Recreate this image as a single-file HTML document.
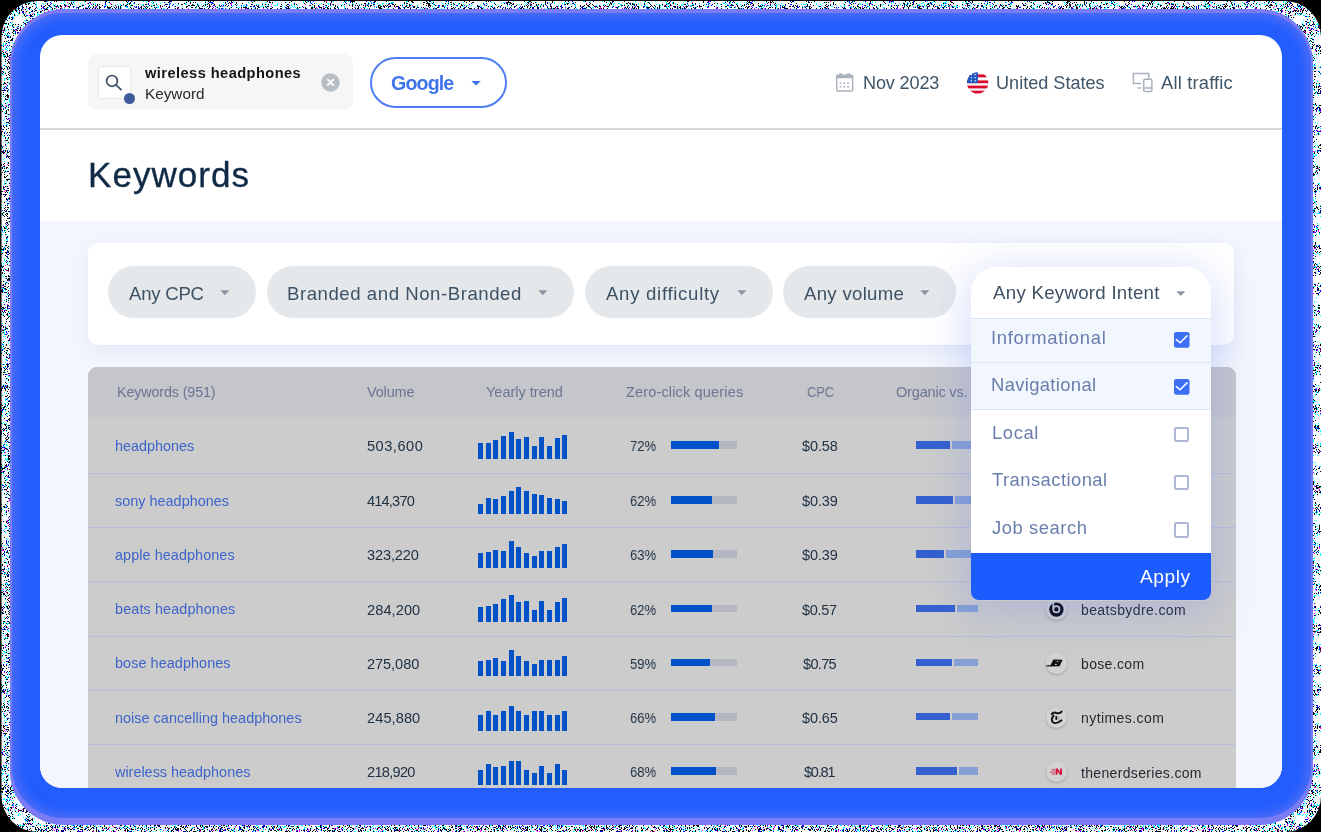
<!DOCTYPE html>
<html><head><meta charset="utf-8"><style>
html,body{margin:0;padding:0;}
body{width:1321px;height:832px;position:relative;overflow:hidden;background:#000;font-family:"Liberation Sans", sans-serif;}
.r{position:absolute;}
.t{position:absolute;line-height:1;white-space:nowrap;font-family:"Liberation Sans", sans-serif;will-change:transform;}
#card{position:absolute;left:0;top:0;width:1321px;height:832px;clip-path:inset(35px 39px 44px 40px round 22px);}
</style></head><body>
<div class="r" style="left:0.00px;top:0.00px;width:1321.00px;height:832.00px;background:#000;"></div>
<svg class="r" style="left:0;top:0" width="1321" height="832"><defs><filter id="nz" x="0" y="0" width="1321" height="832" filterUnits="userSpaceOnUse" color-interpolation-filters="sRGB"><feTurbulence type="turbulence" baseFrequency="0.95" numOctaves="1" seed="11"/><feColorMatrix type="matrix" values="1 0 0 0 0  1 0 0 0 0  1 0 0 0 0  0 0 0 0 1"/><feComponentTransfer><feFuncR type="discrete" tableValues="1 1 1 1 1 0 0 0 0 1 0 0 0 0 0 0 0 0 0 0"/><feFuncG type="discrete" tableValues="1 1 1 1 1 1 0 0 0 0 0 0 0 0 0 0 0 0 0 0"/><feFuncB type="discrete" tableValues="1 1 1 1 1 1 0 1 0 1 0 0 0 0 0 0 0 0 0 0"/></feComponentTransfer></filter><clipPath id="hc"><rect x="1.5" y="1" width="1319.5" height="831" rx="36"/></clipPath></defs><g clip-path="url(#hc)"><rect x="0" y="0" width="1321" height="832" fill="#fff" filter="url(#nz)"/></g></svg>
<div class="r" style="left:9.50px;top:9.00px;width:1303.50px;height:816.00px;background:#7b7cf4;border-radius:54px;"></div>
<div class="r" style="left:12.00px;top:12.50px;width:1298.50px;height:805.50px;background:#235dfd;border-radius:51px;box-shadow:inset 0 0 12px 3px rgba(120,125,240,0.6);"></div>
<div id="card">
<div class="r" style="left:0.00px;top:0.00px;width:1321.00px;height:832.00px;background:#ffffff;"></div>
<div class="r" style="left:0.00px;top:221.00px;width:1321.00px;height:611.00px;background:#f3f6fc;"></div>
<div class="r" style="left:0.00px;top:128.20px;width:1321.00px;height:1.50px;background:#d4d8de;"></div>
<div class="r" style="left:88.00px;top:54.00px;width:265.00px;height:56.00px;background:#f6f6f6;border-radius:9px;"></div>
<div class="r" style="left:97.50px;top:66.00px;width:33.00px;height:33.30px;background:#ffffff;border:1px solid #e5e8ed;box-sizing:border-box;border-radius:3px;"></div>
<svg class="r" style="left:98px;top:66px" width="32" height="33"><circle cx="14" cy="14.9" r="5.4" fill="none" stroke="#3b4f66" stroke-width="1.7"/><line x1="18" y1="18.9" x2="23" y2="23.6" stroke="#3b4f66" stroke-width="1.8" stroke-linecap="round"/></svg>
<div class="r" style="left:124.00px;top:93.00px;width:11.00px;height:11.00px;background:#3e5b9c;border-radius:50%;"></div>
<div class="t" style="left:145.00px;top:65.64px;font-size:14.6px;color:#151515;font-weight:700;letter-spacing:0.45px;">wireless headphones</div>
<div class="t" style="left:145.00px;top:86.05px;font-size:15.3px;color:#2a2a2a;font-weight:400;letter-spacing:0px;">Keyword</div>
<svg class="r" style="left:321px;top:73px" width="19" height="19"><circle cx="9.5" cy="9.5" r="9.2" fill="#b8bec5"/><path d="M6.8 6.6 L12.2 12 M12.2 6.6 L6.8 12" stroke="#fff" stroke-width="2" stroke-linecap="round"/></svg>
<div class="r" style="left:370.00px;top:56.80px;width:137.00px;height:51.50px;background:transparent;border:2px solid #4d7ff3;box-sizing:border-box;border-radius:26px;"></div>
<div class="t" style="left:390.80px;top:73.71px;font-size:19.6px;color:#3f74ea;font-weight:700;letter-spacing:-0.85px;">Google</div>
<svg class="r" style="left:471px;top:80px" width="11" height="7"><path d="M0.4 0.9 L9.8 0.9 L5.1 5.6 Z" fill="#3f74ea"/></svg>
<svg class="r" style="left:835px;top:72px" width="20" height="21"><rect x="1.7" y="3.2" width="16" height="15.8" rx="1" fill="none" stroke="#a9b2bc" stroke-width="1.4"/><rect x="1.7" y="3.2" width="16" height="3" fill="#a9b2bc"/><rect x="4.2" y="1.3" width="3" height="2.6" fill="#a9b2bc"/><rect x="11.8" y="1.3" width="3" height="2.6" fill="#a9b2bc"/><rect x="4.6" y="10.4" width="1.7" height="1.7" fill="#a9b2bc"/><rect x="4.6" y="13.9" width="1.7" height="1.7" fill="#a9b2bc"/><rect x="8.4" y="10.4" width="1.7" height="1.7" fill="#a9b2bc"/><rect x="8.4" y="13.9" width="1.7" height="1.7" fill="#a9b2bc"/><rect x="12.2" y="10.4" width="1.7" height="1.7" fill="#a9b2bc"/><rect x="12.2" y="13.9" width="1.7" height="1.7" fill="#a9b2bc"/></svg>
<div class="t" style="left:863.00px;top:73.68px;font-size:18.1px;color:#3e5467;font-weight:400;letter-spacing:-0.15px;">Nov 2023</div>
<svg class="r" style="left:967px;top:71.5px" width="22" height="23"><defs><clipPath id="fc"><circle cx="10.6" cy="10.9" r="10.7"/></clipPath></defs><g clip-path="url(#fc)"><rect width="22" height="23" fill="#f4f6f8"/><rect x="0" y="2.40" width="22" height="2.90" fill="#dc0a2c"/><rect x="0" y="8.40" width="22" height="2.80" fill="#dc0a2c"/><rect x="0" y="13.60" width="22" height="2.80" fill="#dc0a2c"/><rect x="0" y="18.70" width="22" height="3.20" fill="#dc0a2c"/><rect x="0" y="0" width="10.9" height="11.1" fill="#1f58c2"/><rect x="3.8" y="2.0" width="1.2" height="1.2" fill="#fff"/><rect x="3.8" y="5.1" width="1.2" height="1.2" fill="#fff"/><rect x="3.8" y="8.2" width="1.2" height="1.2" fill="#fff"/><rect x="7.6" y="2.0" width="1.2" height="1.2" fill="#fff"/><rect x="7.6" y="5.1" width="1.2" height="1.2" fill="#fff"/><rect x="7.6" y="8.2" width="1.2" height="1.2" fill="#fff"/></g></svg>
<div class="t" style="left:995.50px;top:73.68px;font-size:18.1px;color:#3e5467;font-weight:400;letter-spacing:0px;">United States</div>
<svg class="r" style="left:1132px;top:72px" width="22" height="22"><path d="M16.7 6.6 V1.4 H1.4 V11.6 H9" fill="none" stroke="#a9b2bc" stroke-width="1.5"/><path d="M5.6 16 H9.2" stroke="#a9b2bc" stroke-width="1.5"/><rect x="11.7" y="7.3" width="8.2" height="12.3" rx="1.4" fill="none" stroke="#a9b2bc" stroke-width="1.5"/><line x1="11.7" y1="16" x2="19.9" y2="16" stroke="#a9b2bc" stroke-width="1.4"/></svg>
<div class="t" style="left:1161.00px;top:73.51px;font-size:18.3px;color:#3e5467;font-weight:400;letter-spacing:0.2px;">All traffic</div>
<div class="t" style="left:88.30px;top:157.37px;font-size:35px;color:#0f2a45;font-weight:400;letter-spacing:1.05px;-webkit-text-stroke:0.35px #0f2a45;">Keywords</div>
<div class="r" style="left:87.80px;top:242.50px;width:1146.20px;height:102.50px;background:#ffffff;border-radius:10px;box-shadow:0 6px 18px rgba(90,120,230,0.10);"></div>
<div class="r" style="left:108.00px;top:266.40px;width:148.00px;height:52.00px;background:#e5e8eb;border-radius:26px;"></div>
<div class="t" style="left:129.00px;top:284.86px;font-size:18.6px;color:#3e5265;font-weight:400;letter-spacing:-0.25px;">Any CPC</div>
<svg class="r" style="left:219.5px;top:290.4px" width="10" height="6"><path d="M0.3 0.3 L9.3 0.3 L4.8 5.3 Z" fill="#8a96a2"/></svg>
<div class="r" style="left:267.00px;top:266.40px;width:307.00px;height:52.00px;background:#e5e8eb;border-radius:26px;"></div>
<div class="t" style="left:287.00px;top:284.86px;font-size:18.6px;color:#3e5265;font-weight:400;letter-spacing:0.55px;">Branded and Non-Branded</div>
<svg class="r" style="left:537.5px;top:290.4px" width="10" height="6"><path d="M0.3 0.3 L9.3 0.3 L4.8 5.3 Z" fill="#8a96a2"/></svg>
<div class="r" style="left:585.00px;top:266.40px;width:188.00px;height:52.00px;background:#e5e8eb;border-radius:26px;"></div>
<div class="t" style="left:606.00px;top:284.86px;font-size:18.6px;color:#3e5265;font-weight:400;letter-spacing:0.7px;">Any difficulty</div>
<svg class="r" style="left:736.5px;top:290.4px" width="10" height="6"><path d="M0.3 0.3 L9.3 0.3 L4.8 5.3 Z" fill="#8a96a2"/></svg>
<div class="r" style="left:783.00px;top:266.40px;width:173.00px;height:52.00px;background:#e5e8eb;border-radius:26px;"></div>
<div class="t" style="left:804.00px;top:284.86px;font-size:18.6px;color:#3e5265;font-weight:400;letter-spacing:0.3px;">Any volume</div>
<svg class="r" style="left:919.5px;top:290.4px" width="10" height="6"><path d="M0.3 0.3 L9.3 0.3 L4.8 5.3 Z" fill="#8a96a2"/></svg>
<div class="r" style="left:87.80px;top:367.00px;width:1148.20px;height:500.00px;background:#cccccc;border-radius:9px 9px 0 0;"></div>
<div class="r" style="left:87.80px;top:367.00px;width:1148.20px;height:50.00px;background:#c5c6cb;border-radius:9px 9px 0 0;"></div>
<div class="t" style="left:116.50px;top:384.90px;font-size:14.3px;color:#6a7592;font-weight:400;letter-spacing:-0.12px;">Keywords (951)</div>
<div class="t" style="left:367.00px;top:384.81px;font-size:14.4px;color:#6a7592;font-weight:400;letter-spacing:-0.1px;">Volume</div>
<div class="t" style="left:485.50px;top:384.73px;font-size:14.5px;color:#6a7592;font-weight:400;letter-spacing:0px;">Yearly trend</div>
<div class="t" style="left:626.00px;top:384.73px;font-size:14.5px;color:#6a7592;font-weight:400;letter-spacing:0.16px;">Zero-click queries</div>
<div class="t" style="left:806.60px;top:384.73px;font-size:14.5px;color:#6a7592;font-weight:400;letter-spacing:0px;transform:scaleX(0.88);transform-origin:0 0;">CPC</div>
<div class="t" style="left:896.00px;top:384.73px;font-size:14.5px;color:#6a7592;font-weight:400;letter-spacing:-0.18px;">Organic vs. Paid</div>
<div class="t" style="left:1080.00px;top:384.73px;font-size:14.5px;color:#6a7592;font-weight:400;letter-spacing:0.1px;">Top competitor</div>
<div class="r" style="left:87.80px;top:473.00px;width:1148.20px;height:1.00px;background:#b6bfdc;"></div>
<div class="r" style="left:87.80px;top:527.20px;width:1148.20px;height:1.00px;background:#b6bfdc;"></div>
<div class="r" style="left:87.80px;top:581.40px;width:1148.20px;height:1.00px;background:#b6bfdc;"></div>
<div class="r" style="left:87.80px;top:635.60px;width:1148.20px;height:1.00px;background:#b6bfdc;"></div>
<div class="r" style="left:87.80px;top:689.80px;width:1148.20px;height:1.00px;background:#b6bfdc;"></div>
<div class="r" style="left:87.80px;top:744.00px;width:1148.20px;height:1.00px;background:#b6bfdc;"></div>
<div class="t" style="left:115.30px;top:438.61px;font-size:14.4px;color:#3e64cb;font-weight:400;letter-spacing:-0.0049999999999999975px;">headphones</div>
<div class="t" style="left:366.80px;top:439.04px;font-size:14.6px;color:#203244;font-weight:400;letter-spacing:0.507px;">503,600</div>
<div class="r" style="left:478.00px;top:443.30px;width:5.20px;height:15.40px;background:#0050c8;"></div>
<div class="r" style="left:485.65px;top:442.50px;width:5.20px;height:16.20px;background:#0050c8;"></div>
<div class="r" style="left:493.30px;top:440.00px;width:5.20px;height:18.70px;background:#0050c8;"></div>
<div class="r" style="left:500.95px;top:435.80px;width:5.20px;height:22.90px;background:#0050c8;"></div>
<div class="r" style="left:508.60px;top:432.10px;width:5.20px;height:26.60px;background:#0050c8;"></div>
<div class="r" style="left:516.25px;top:438.50px;width:5.20px;height:20.20px;background:#0050c8;"></div>
<div class="r" style="left:523.90px;top:437.10px;width:5.20px;height:21.60px;background:#0050c8;"></div>
<div class="r" style="left:531.55px;top:446.20px;width:5.20px;height:12.50px;background:#0050c8;"></div>
<div class="r" style="left:539.20px;top:437.10px;width:5.20px;height:21.60px;background:#0050c8;"></div>
<div class="r" style="left:546.85px;top:446.20px;width:5.20px;height:12.50px;background:#0050c8;"></div>
<div class="r" style="left:554.50px;top:438.30px;width:5.20px;height:20.40px;background:#0050c8;"></div>
<div class="r" style="left:562.15px;top:434.70px;width:5.20px;height:24.00px;background:#0050c8;"></div>
<div class="t" style="left:629.80px;top:439.03px;font-size:14.5px;color:#203244;font-weight:400;letter-spacing:0px;transform:scaleX(0.9);transform-origin:0 0;">72%</div>
<div class="r" style="left:671.00px;top:441.00px;width:66.00px;height:7.70px;background:#b4b7c0;"></div>
<div class="r" style="left:671.00px;top:441.00px;width:48.02px;height:7.70px;background:#0050c8;"></div>
<div class="t" style="left:802.00px;top:439.03px;font-size:14.5px;color:#203244;font-weight:400;letter-spacing:-0.1px;">$0.58</div>
<div class="r" style="left:916.00px;top:441.00px;width:62.40px;height:7.50px;background:#86a0d4;"></div>
<div class="r" style="left:916.00px;top:441.00px;width:34.30px;height:7.50px;background:#3461cf;"></div>
<div class="r" style="left:950.30px;top:441.00px;width:2.00px;height:7.50px;background:#cccccc;"></div>
<div class="r" style="left:1045.60px;top:434.70px;width:21.60px;height:21.60px;background:#d2d2d2;border-radius:50%;box-shadow:0 1px 2.5px rgba(0,0,0,0.22);"></div>
<div class="t" style="left:1080.80px;top:439.55px;font-size:14.0px;color:#252a31;font-weight:400;letter-spacing:0.395px;">apple.com</div>
<div class="t" style="left:115.30px;top:493.71px;font-size:14.4px;color:#3e64cb;font-weight:400;letter-spacing:0.027000000000000003px;">sony headphones</div>
<div class="t" style="left:366.80px;top:494.14px;font-size:14.6px;color:#203244;font-weight:400;letter-spacing:-0.8270000000000001px;">414,370</div>
<div class="r" style="left:478.00px;top:503.80px;width:5.20px;height:10.00px;background:#0050c8;"></div>
<div class="r" style="left:485.65px;top:497.60px;width:5.20px;height:16.20px;background:#0050c8;"></div>
<div class="r" style="left:493.30px;top:499.00px;width:5.20px;height:14.80px;background:#0050c8;"></div>
<div class="r" style="left:500.95px;top:496.30px;width:5.20px;height:17.50px;background:#0050c8;"></div>
<div class="r" style="left:508.60px;top:491.10px;width:5.20px;height:22.70px;background:#0050c8;"></div>
<div class="r" style="left:516.25px;top:487.30px;width:5.20px;height:26.50px;background:#0050c8;"></div>
<div class="r" style="left:523.90px;top:491.10px;width:5.20px;height:22.70px;background:#0050c8;"></div>
<div class="r" style="left:531.55px;top:493.80px;width:5.20px;height:20.00px;background:#0050c8;"></div>
<div class="r" style="left:539.20px;top:495.10px;width:5.20px;height:18.70px;background:#0050c8;"></div>
<div class="r" style="left:546.85px;top:497.60px;width:5.20px;height:16.20px;background:#0050c8;"></div>
<div class="r" style="left:554.50px;top:499.00px;width:5.20px;height:14.80px;background:#0050c8;"></div>
<div class="r" style="left:562.15px;top:501.30px;width:5.20px;height:12.50px;background:#0050c8;"></div>
<div class="t" style="left:629.80px;top:494.13px;font-size:14.5px;color:#203244;font-weight:400;letter-spacing:0px;transform:scaleX(0.9);transform-origin:0 0;">62%</div>
<div class="r" style="left:671.00px;top:496.10px;width:66.00px;height:7.70px;background:#b4b7c0;"></div>
<div class="r" style="left:671.00px;top:496.10px;width:41.35px;height:7.70px;background:#0050c8;"></div>
<div class="t" style="left:802.00px;top:494.13px;font-size:14.5px;color:#203244;font-weight:400;letter-spacing:-0.1px;">$0.39</div>
<div class="r" style="left:916.00px;top:496.10px;width:62.40px;height:7.50px;background:#86a0d4;"></div>
<div class="r" style="left:916.00px;top:496.10px;width:37.00px;height:7.50px;background:#3461cf;"></div>
<div class="r" style="left:953.00px;top:496.10px;width:2.00px;height:7.50px;background:#cccccc;"></div>
<div class="r" style="left:1045.60px;top:489.80px;width:21.60px;height:21.60px;background:#d2d2d2;border-radius:50%;box-shadow:0 1px 2.5px rgba(0,0,0,0.22);"></div>
<div class="t" style="left:1080.80px;top:494.65px;font-size:14.0px;color:#252a31;font-weight:400;letter-spacing:0.41700000000000004px;">sony.com</div>
<div class="t" style="left:115.30px;top:547.91px;font-size:14.4px;color:#3e64cb;font-weight:400;letter-spacing:0.076px;">apple headphones</div>
<div class="t" style="left:366.80px;top:548.34px;font-size:14.6px;color:#203244;font-weight:400;letter-spacing:-0.14300000000000002px;">323,220</div>
<div class="r" style="left:478.00px;top:552.60px;width:5.20px;height:15.40px;background:#0050c8;"></div>
<div class="r" style="left:485.65px;top:551.75px;width:5.20px;height:16.25px;background:#0050c8;"></div>
<div class="r" style="left:493.30px;top:549.50px;width:5.20px;height:18.50px;background:#0050c8;"></div>
<div class="r" style="left:500.95px;top:551.30px;width:5.20px;height:16.70px;background:#0050c8;"></div>
<div class="r" style="left:508.60px;top:541.40px;width:5.20px;height:26.60px;background:#0050c8;"></div>
<div class="r" style="left:516.25px;top:547.20px;width:5.20px;height:20.80px;background:#0050c8;"></div>
<div class="r" style="left:523.90px;top:552.80px;width:5.20px;height:15.20px;background:#0050c8;"></div>
<div class="r" style="left:531.55px;top:555.50px;width:5.20px;height:12.50px;background:#0050c8;"></div>
<div class="r" style="left:539.20px;top:551.30px;width:5.20px;height:16.70px;background:#0050c8;"></div>
<div class="r" style="left:546.85px;top:551.30px;width:5.20px;height:16.70px;background:#0050c8;"></div>
<div class="r" style="left:554.50px;top:547.20px;width:5.20px;height:20.80px;background:#0050c8;"></div>
<div class="r" style="left:562.15px;top:543.80px;width:5.20px;height:24.20px;background:#0050c8;"></div>
<div class="t" style="left:629.80px;top:548.33px;font-size:14.5px;color:#203244;font-weight:400;letter-spacing:0px;transform:scaleX(0.9);transform-origin:0 0;">63%</div>
<div class="r" style="left:671.00px;top:550.30px;width:66.00px;height:7.70px;background:#b4b7c0;"></div>
<div class="r" style="left:671.00px;top:550.30px;width:42.02px;height:7.70px;background:#0050c8;"></div>
<div class="t" style="left:802.00px;top:548.33px;font-size:14.5px;color:#203244;font-weight:400;letter-spacing:-0.1px;">$0.39</div>
<div class="r" style="left:916.00px;top:550.30px;width:62.40px;height:7.50px;background:#86a0d4;"></div>
<div class="r" style="left:916.00px;top:550.30px;width:28.00px;height:7.50px;background:#3461cf;"></div>
<div class="r" style="left:944.00px;top:550.30px;width:2.00px;height:7.50px;background:#cccccc;"></div>
<div class="r" style="left:1045.60px;top:544.00px;width:21.60px;height:21.60px;background:#d2d2d2;border-radius:50%;box-shadow:0 1px 2.5px rgba(0,0,0,0.22);"></div>
<div class="t" style="left:1080.80px;top:548.85px;font-size:14.0px;color:#252a31;font-weight:400;letter-spacing:0.395px;">apple.com</div>
<div class="t" style="left:115.30px;top:602.11px;font-size:14.4px;color:#3e64cb;font-weight:400;letter-spacing:0.123px;">beats headphones</div>
<div class="t" style="left:366.80px;top:602.54px;font-size:14.6px;color:#203244;font-weight:400;letter-spacing:0.073px;">284,200</div>
<div class="r" style="left:478.00px;top:606.95px;width:5.20px;height:15.25px;background:#0050c8;"></div>
<div class="r" style="left:485.65px;top:606.10px;width:5.20px;height:16.10px;background:#0050c8;"></div>
<div class="r" style="left:493.30px;top:603.60px;width:5.20px;height:18.60px;background:#0050c8;"></div>
<div class="r" style="left:500.95px;top:599.45px;width:5.20px;height:22.75px;background:#0050c8;"></div>
<div class="r" style="left:508.60px;top:595.30px;width:5.20px;height:26.90px;background:#0050c8;"></div>
<div class="r" style="left:516.25px;top:602.00px;width:5.20px;height:20.20px;background:#0050c8;"></div>
<div class="r" style="left:523.90px;top:600.50px;width:5.20px;height:21.70px;background:#0050c8;"></div>
<div class="r" style="left:531.55px;top:609.50px;width:5.20px;height:12.70px;background:#0050c8;"></div>
<div class="r" style="left:539.20px;top:600.50px;width:5.20px;height:21.70px;background:#0050c8;"></div>
<div class="r" style="left:546.85px;top:609.50px;width:5.20px;height:12.70px;background:#0050c8;"></div>
<div class="r" style="left:554.50px;top:602.00px;width:5.20px;height:20.20px;background:#0050c8;"></div>
<div class="r" style="left:562.15px;top:598.20px;width:5.20px;height:24.00px;background:#0050c8;"></div>
<div class="t" style="left:629.80px;top:602.53px;font-size:14.5px;color:#203244;font-weight:400;letter-spacing:0px;transform:scaleX(0.9);transform-origin:0 0;">62%</div>
<div class="r" style="left:671.00px;top:604.50px;width:66.00px;height:7.70px;background:#b4b7c0;"></div>
<div class="r" style="left:671.00px;top:604.50px;width:41.35px;height:7.70px;background:#0050c8;"></div>
<div class="t" style="left:802.45px;top:602.53px;font-size:14.5px;color:#203244;font-weight:400;letter-spacing:-0.32499999999999996px;">$0.57</div>
<div class="r" style="left:916.00px;top:604.50px;width:62.40px;height:7.50px;background:#86a0d4;"></div>
<div class="r" style="left:916.00px;top:604.50px;width:39.30px;height:7.50px;background:#3461cf;"></div>
<div class="r" style="left:955.30px;top:604.50px;width:2.00px;height:7.50px;background:#cccccc;"></div>
<div class="r" style="left:1045.60px;top:598.20px;width:21.60px;height:21.60px;background:#d2d2d2;border-radius:50%;box-shadow:0 1px 2.5px rgba(0,0,0,0.22);"></div>
<svg class="r" style="left:1040px;top:595.50px" width="35" height="30"><circle cx="16.4" cy="13.6" r="7.2" fill="#08080f"/><circle cx="16.4" cy="13.2" r="3.1" fill="none" stroke="#c9ccd6" stroke-width="1.7"/><line x1="13.3" y1="6.2" x2="13.3" y2="13.2" stroke="#c9ccd6" stroke-width="1.7"/></svg>
<div class="t" style="left:1080.80px;top:603.05px;font-size:14.0px;color:#252a31;font-weight:400;letter-spacing:0.385px;">beatsbydre.com</div>
<div class="t" style="left:115.30px;top:656.31px;font-size:14.4px;color:#3e64cb;font-weight:400;letter-spacing:0.077px;">bose headphones</div>
<div class="t" style="left:366.80px;top:656.74px;font-size:14.6px;color:#203244;font-weight:400;letter-spacing:-0.077px;">275,080</div>
<div class="r" style="left:478.00px;top:661.00px;width:5.20px;height:15.40px;background:#0050c8;"></div>
<div class="r" style="left:485.65px;top:660.15px;width:5.20px;height:16.25px;background:#0050c8;"></div>
<div class="r" style="left:493.30px;top:657.80px;width:5.20px;height:18.60px;background:#0050c8;"></div>
<div class="r" style="left:500.95px;top:661.15px;width:5.20px;height:15.25px;background:#0050c8;"></div>
<div class="r" style="left:508.60px;top:649.70px;width:5.20px;height:26.70px;background:#0050c8;"></div>
<div class="r" style="left:516.25px;top:656.40px;width:5.20px;height:20.00px;background:#0050c8;"></div>
<div class="r" style="left:523.90px;top:661.15px;width:5.20px;height:15.25px;background:#0050c8;"></div>
<div class="r" style="left:531.55px;top:663.65px;width:5.20px;height:12.75px;background:#0050c8;"></div>
<div class="r" style="left:539.20px;top:659.90px;width:5.20px;height:16.50px;background:#0050c8;"></div>
<div class="r" style="left:546.85px;top:659.90px;width:5.20px;height:16.50px;background:#0050c8;"></div>
<div class="r" style="left:554.50px;top:659.90px;width:5.20px;height:16.50px;background:#0050c8;"></div>
<div class="r" style="left:562.15px;top:656.40px;width:5.20px;height:20.00px;background:#0050c8;"></div>
<div class="t" style="left:629.80px;top:656.73px;font-size:14.5px;color:#203244;font-weight:400;letter-spacing:0px;transform:scaleX(0.9);transform-origin:0 0;">59%</div>
<div class="r" style="left:671.00px;top:658.70px;width:66.00px;height:7.70px;background:#b4b7c0;"></div>
<div class="r" style="left:671.00px;top:658.70px;width:39.35px;height:7.70px;background:#0050c8;"></div>
<div class="t" style="left:803.10px;top:656.73px;font-size:14.5px;color:#203244;font-weight:400;letter-spacing:-0.65px;">$0.75</div>
<div class="r" style="left:916.00px;top:658.70px;width:62.40px;height:7.50px;background:#86a0d4;"></div>
<div class="r" style="left:916.00px;top:658.70px;width:35.80px;height:7.50px;background:#3461cf;"></div>
<div class="r" style="left:951.80px;top:658.70px;width:2.00px;height:7.50px;background:#cccccc;"></div>
<div class="r" style="left:1045.60px;top:652.40px;width:21.60px;height:21.60px;background:#d2d2d2;border-radius:50%;box-shadow:0 1px 2.5px rgba(0,0,0,0.22);"></div>
<svg class="r" style="left:1040px;top:649.70px" width="35" height="30"><path d="M6.1 15.6 L10.6 15.1 L13.3 9.5 L22.6 9.8 L19.6 16.3 L6.4 16.6 Z" fill="#111"/><ellipse cx="17.6" cy="11.5" rx="1" ry="0.6" fill="#d2d2d2"/><ellipse cx="15.9" cy="14.4" rx="1" ry="0.6" fill="#d2d2d2"/></svg>
<div class="t" style="left:1080.80px;top:657.25px;font-size:14.0px;color:#252a31;font-weight:400;letter-spacing:0.34299999999999997px;">bose.com</div>
<div class="t" style="left:115.30px;top:710.51px;font-size:14.4px;color:#3e64cb;font-weight:400;letter-spacing:0.037000000000000005px;">noise cancelling headphones</div>
<div class="t" style="left:366.80px;top:710.94px;font-size:14.6px;color:#203244;font-weight:400;letter-spacing:0.073px;">245,880</div>
<div class="r" style="left:478.00px;top:715.20px;width:5.20px;height:15.40px;background:#0050c8;"></div>
<div class="r" style="left:485.65px;top:711.40px;width:5.20px;height:19.20px;background:#0050c8;"></div>
<div class="r" style="left:493.30px;top:715.40px;width:5.20px;height:15.20px;background:#0050c8;"></div>
<div class="r" style="left:500.95px;top:711.40px;width:5.20px;height:19.20px;background:#0050c8;"></div>
<div class="r" style="left:508.60px;top:706.40px;width:5.20px;height:24.20px;background:#0050c8;"></div>
<div class="r" style="left:516.25px;top:711.40px;width:5.20px;height:19.20px;background:#0050c8;"></div>
<div class="r" style="left:523.90px;top:715.40px;width:5.20px;height:15.20px;background:#0050c8;"></div>
<div class="r" style="left:531.55px;top:711.40px;width:5.20px;height:19.20px;background:#0050c8;"></div>
<div class="r" style="left:539.20px;top:711.40px;width:5.20px;height:19.20px;background:#0050c8;"></div>
<div class="r" style="left:546.85px;top:715.40px;width:5.20px;height:15.20px;background:#0050c8;"></div>
<div class="r" style="left:554.50px;top:715.40px;width:5.20px;height:15.20px;background:#0050c8;"></div>
<div class="r" style="left:562.15px;top:711.40px;width:5.20px;height:19.20px;background:#0050c8;"></div>
<div class="t" style="left:629.80px;top:710.93px;font-size:14.5px;color:#203244;font-weight:400;letter-spacing:0px;transform:scaleX(0.9);transform-origin:0 0;">66%</div>
<div class="r" style="left:671.00px;top:712.90px;width:66.00px;height:7.70px;background:#b4b7c0;"></div>
<div class="r" style="left:671.00px;top:712.90px;width:44.02px;height:7.70px;background:#0050c8;"></div>
<div class="t" style="left:802.00px;top:710.93px;font-size:14.5px;color:#203244;font-weight:400;letter-spacing:-0.1px;">$0.65</div>
<div class="r" style="left:916.00px;top:712.90px;width:62.40px;height:7.50px;background:#86a0d4;"></div>
<div class="r" style="left:916.00px;top:712.90px;width:34.10px;height:7.50px;background:#3461cf;"></div>
<div class="r" style="left:950.10px;top:712.90px;width:2.00px;height:7.50px;background:#cccccc;"></div>
<div class="r" style="left:1045.60px;top:706.60px;width:21.60px;height:21.60px;background:#d2d2d2;border-radius:50%;box-shadow:0 1px 2.5px rgba(0,0,0,0.22);"></div>
<svg class="r" style="left:1040px;top:703.90px" width="35" height="30"><path d="M11.8 10.2 Q13.4 7.8 16.4 8.9 Q19.4 9.9 21.6 7.7" fill="none" stroke="#111" stroke-width="2.1" stroke-linecap="round"/><path d="M13.6 11.6 Q10.9 14.6 12.4 17.8 Q15.6 21 21.5 16.3" fill="none" stroke="#111" stroke-width="1.9" stroke-linecap="round"/><rect x="15.4" y="12.1" width="1.8" height="3.8" fill="#111"/><rect x="18.4" y="13.4" width="1" height="1" fill="#444"/></svg>
<div class="t" style="left:1080.80px;top:711.45px;font-size:14.0px;color:#252a31;font-weight:400;letter-spacing:0.43300000000000005px;">nytimes.com</div>
<div class="t" style="left:115.30px;top:764.71px;font-size:14.4px;color:#3e64cb;font-weight:400;letter-spacing:0.008px;">wireless headphones</div>
<div class="t" style="left:366.80px;top:765.14px;font-size:14.6px;color:#203244;font-weight:400;letter-spacing:-0.727px;">218,920</div>
<div class="r" style="left:478.00px;top:770.05px;width:5.20px;height:14.75px;background:#0050c8;"></div>
<div class="r" style="left:485.65px;top:763.80px;width:5.20px;height:21.00px;background:#0050c8;"></div>
<div class="r" style="left:493.30px;top:766.70px;width:5.20px;height:18.10px;background:#0050c8;"></div>
<div class="r" style="left:500.95px;top:766.20px;width:5.20px;height:18.60px;background:#0050c8;"></div>
<div class="r" style="left:508.60px;top:761.20px;width:5.20px;height:23.60px;background:#0050c8;"></div>
<div class="r" style="left:516.25px;top:761.20px;width:5.20px;height:23.60px;background:#0050c8;"></div>
<div class="r" style="left:523.90px;top:770.05px;width:5.20px;height:14.75px;background:#0050c8;"></div>
<div class="r" style="left:531.55px;top:772.70px;width:5.20px;height:12.10px;background:#0050c8;"></div>
<div class="r" style="left:539.20px;top:766.20px;width:5.20px;height:18.60px;background:#0050c8;"></div>
<div class="r" style="left:546.85px;top:772.70px;width:5.20px;height:12.10px;background:#0050c8;"></div>
<div class="r" style="left:554.50px;top:763.80px;width:5.20px;height:21.00px;background:#0050c8;"></div>
<div class="r" style="left:562.15px;top:770.05px;width:5.20px;height:14.75px;background:#0050c8;"></div>
<div class="t" style="left:629.80px;top:765.13px;font-size:14.5px;color:#203244;font-weight:400;letter-spacing:0px;transform:scaleX(0.9);transform-origin:0 0;">68%</div>
<div class="r" style="left:671.00px;top:767.10px;width:66.00px;height:7.70px;background:#b4b7c0;"></div>
<div class="r" style="left:671.00px;top:767.10px;width:45.36px;height:7.70px;background:#0050c8;"></div>
<div class="t" style="left:804.20px;top:765.13px;font-size:14.5px;color:#203244;font-weight:400;letter-spacing:-1.2px;">$0.81</div>
<div class="r" style="left:916.00px;top:767.10px;width:62.40px;height:7.50px;background:#86a0d4;"></div>
<div class="r" style="left:916.00px;top:767.10px;width:40.80px;height:7.50px;background:#3461cf;"></div>
<div class="r" style="left:956.80px;top:767.10px;width:2.00px;height:7.50px;background:#cccccc;"></div>
<div class="r" style="left:1045.60px;top:760.80px;width:21.60px;height:21.60px;background:#d2d2d2;border-radius:50%;box-shadow:0 1px 2.5px rgba(0,0,0,0.22);"></div>
<svg class="r" style="left:1040px;top:758.10px" width="35" height="30"><path d="M15.6 10.6 L17.6 10.6 L20.2 14.2 L20.2 10.6 L22 10.6 L22 16.8 L20 16.8 L17.4 13.2 L17.4 16.8 L15.6 16.8 Z" fill="#d40f3c"/><rect x="11.6" y="11.2" width="3.4" height="1.1" fill="#d8406a"/><rect x="10" y="13.6" width="5" height="1.1" fill="#d8406a"/><rect x="11.6" y="15.6" width="3.4" height="1" fill="#d8406a"/></svg>
<div class="t" style="left:1080.80px;top:765.65px;font-size:14.0px;color:#252a31;font-weight:400;letter-spacing:0.33499999999999996px;">thenerdseries.com</div>
<div class="r" style="left:971.20px;top:266.50px;width:240.30px;height:334.00px;background:transparent;border-radius:26px 26px 8px 8px;box-shadow:0 8px 40px 6px rgba(80,110,230,0.22);"></div>
<div class="r" style="left:971.20px;top:266.50px;width:240.30px;height:52.00px;background:#ffffff;border-radius:26px 26px 0 0;"></div>
<div class="t" style="left:992.70px;top:284.17px;font-size:18.7px;color:#3f5164;font-weight:400;letter-spacing:0.26px;">Any Keyword Intent</div>
<svg class="r" style="left:1175.5px;top:290.5px" width="10" height="6"><path d="M0.3 0.3 L9.3 0.3 L4.8 5 Z" fill="#8a96a2"/></svg>
<div class="r" style="left:971.20px;top:318.00px;width:240.30px;height:234.70px;background:#ffffff;"></div>
<div class="r" style="left:971.20px;top:318.00px;width:240.30px;height:91.00px;background:#f2f6fd;"></div>
<div class="r" style="left:971.20px;top:318.00px;width:240.30px;height:1.00px;background:#dce5f7;"></div>
<div class="r" style="left:971.20px;top:362.00px;width:240.30px;height:1.00px;background:#dce5f7;"></div>
<div class="r" style="left:971.20px;top:408.50px;width:240.30px;height:1.00px;background:#dce5f7;"></div>
<div class="t" style="left:991.40px;top:328.62px;font-size:18.4px;color:#6a7ead;font-weight:400;letter-spacing:0.7px;">Informational</div>
<svg class="r" style="left:1173.7px;top:331.7px" width="16" height="16"><rect x="0" y="0" width="15.5" height="15.8" rx="2.2" fill="#3c6ff4"/><path d="M2.3 7.6 L6.1 10.8 L13 3.9" fill="none" stroke="#fff" stroke-width="1.5" stroke-linecap="round" stroke-linejoin="round"/></svg>
<div class="t" style="left:991.40px;top:375.72px;font-size:18.4px;color:#6a7ead;font-weight:400;letter-spacing:0.35px;">Navigational</div>
<svg class="r" style="left:1173.7px;top:378.8px" width="16" height="16"><rect x="0" y="0" width="15.5" height="15.8" rx="2.2" fill="#3c6ff4"/><path d="M2.3 7.6 L6.1 10.8 L13 3.9" fill="none" stroke="#fff" stroke-width="1.5" stroke-linecap="round" stroke-linejoin="round"/></svg>
<div class="t" style="left:991.60px;top:423.52px;font-size:18.4px;color:#6a7ead;font-weight:400;letter-spacing:0.6px;">Local</div>
<div class="r" style="left:1173.60px;top:427.00px;width:15.40px;height:15.20px;background:transparent;border:2px solid #b0b9d3;box-sizing:border-box;border-radius:2px;"></div>
<div class="t" style="left:992.10px;top:471.42px;font-size:18.4px;color:#6a7ead;font-weight:400;letter-spacing:0.45px;">Transactional</div>
<div class="r" style="left:1173.60px;top:474.90px;width:15.40px;height:15.20px;background:transparent;border:2px solid #b0b9d3;box-sizing:border-box;border-radius:2px;"></div>
<div class="t" style="left:992.20px;top:518.92px;font-size:18.4px;color:#6a7ead;font-weight:400;letter-spacing:0.55px;">Job search</div>
<div class="r" style="left:1173.60px;top:522.40px;width:15.40px;height:15.20px;background:transparent;border:2px solid #b0b9d3;box-sizing:border-box;border-radius:2px;"></div>
<div class="r" style="left:971.20px;top:552.70px;width:240.30px;height:47.70px;background:#1c5cff;border-radius:0 0 8px 8px;"></div>
<div class="t" style="left:1139.50px;top:566.75px;font-size:19.2px;color:#ffffff;font-weight:400;letter-spacing:0.5px;">Apply</div>
</div>
</body></html>
